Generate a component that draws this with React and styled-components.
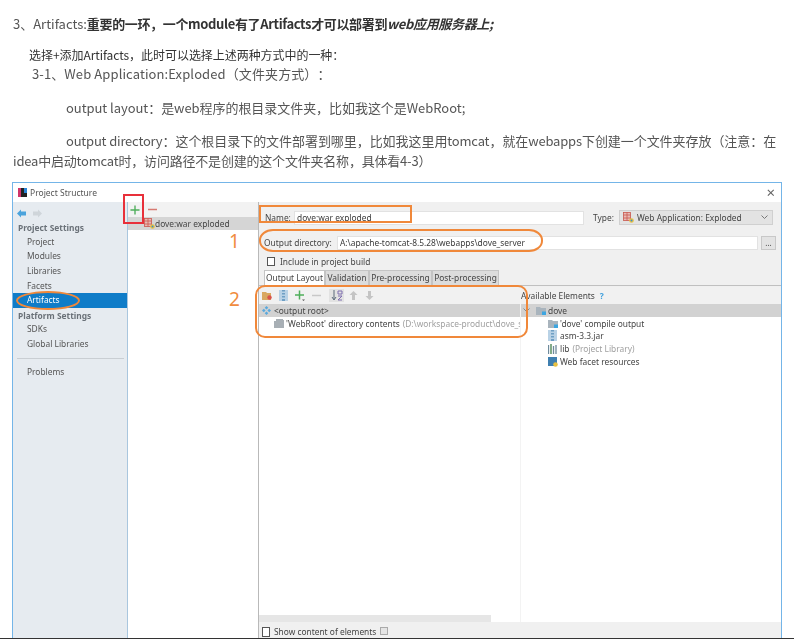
import React from 'react';
import styled, { createGlobalStyle } from 'styled-components';

const Global = createGlobalStyle`
  html, body { margin: 0; padding: 0; background: #fff; }
  * { box-sizing: border-box; }
`;

const Page = styled.div`
  position: relative;
  width: 794px;
  height: 639px;
  overflow: hidden;
  background: #fff;
  border-bottom: 1px solid #333;
  display: flex;
  flex-direction: column;
`;

const Article = styled.div`
  height: 182px;
  padding: 14px 18px 0 13px;
  color: #555;
  font-family: "Noto Sans CJK SC", "Liberation Sans", sans-serif;
  font-size: 13px;
  text-spacing-trim: space-all;
  filter: blur(0.35px);
`;
const Heading = styled.p`
  margin: 0;
  height: 20px;
  line-height: 20px;
  font-size: 13px;
  white-space: nowrap;
  & b { font-weight: 700; color: #333; letter-spacing: -0.35px; }
  & i { font-weight: 700; color: #333; }
`;
const Note = styled.p`
  margin: 11px 0 0 16px;
  height: 19px;
  line-height: 20px;
  font-size: 12px;
  color: #333;
  letter-spacing: -0.05px;
  white-space: nowrap;
`;
const SubHead = styled.p`
  margin: 0 0 0 19px;
  height: 19px;
  line-height: 19px;
  letter-spacing: 0.1px;
  white-space: nowrap;
`;
const Para = styled.p`
  margin: ${p => p.$top}px 0 0;
  line-height: 20px;
  text-indent: 53px;
  text-align: justify;
  letter-spacing: ${p => p.$ls}px;
`;

const Win = styled.div`
  width: 770px;
  height: 456px;
  margin-left: 12px;
  background: #fff;
  border: 1px solid #74b5e8;
  border-bottom: 0;
  display: flex;
  flex-direction: column;
  font-family: "Noto Sans", "Liberation Sans", sans-serif;
  font-size: 8.4px;
  color: #444;
  filter: blur(0.4px);
`;
const TitleBar = styled.div`
  height: 19px;
  flex: none;
  display: flex;
  align-items: center;
  padding: 0 6px 0 5px;
  gap: 3px;
  font-size: 8.5px;
  color: #555;
`;
const Close = styled.span`
  margin-left: auto;
  font-size: 15px;
  line-height: 1;
  color: #666;
`;
const Body = styled.div`
  flex: 1;
  min-height: 0;
  display: flex;
`;
const Sidebar = styled.div`
  width: 115px;
  flex: none;
  background: #e6ebf0;
  border-right: 1px solid #a9c6de;
  display: flex;
  flex-direction: column;
`;
const NavArrows = styled.div`
  height: 19px;
  padding: 3px 0 0 4px;
  display: flex;
  gap: 7px;
  align-items: center;
`;
const SideHead = styled.div`
  height: 13.5px;
  line-height: 13.5px;
  padding-left: 5px;
  font-weight: 700;
  color: #6a7178;
  font-size: 8.4px;
  margin-top: ${p => p.$top || 0}px;
`;
const SideItem = styled.div`
  height: 14.7px;
  line-height: 14.7px;
  padding-left: 14px;
  color: ${p => (p.$on ? '#fff' : '#555')};
  background: ${p => (p.$on ? '#0f7cc8' : 'transparent')};
`;
const SideRule = styled.div`
  height: 1px;
  margin: 6px 3px 6px 4px;
  background: #c9ced3;
`;

const ListCol = styled.div`
  width: 131px;
  flex: none;
  border-right: 1px solid #b9b9b9;
  display: flex;
  flex-direction: column;
`;
const ListBar = styled.div`
  height: 15px;
  background: #f2f2f2;
  display: flex;
  align-items: center;
  padding-left: 2px;
  gap: 8px;
`;
const ListRow = styled.div`
  height: 13px;
  background: #d5d5d5;
  display: flex;
  align-items: center;
  padding-left: 16px;
  color: #444;
  white-space: nowrap;
`;

const Main = styled.div`
  flex: 1;
  min-width: 0;
  background: #f0f0f0;
  display: flex;
  flex-direction: column;
`;
const FormRow = styled.div`
  height: 15px;
  flex: none;
  margin-top: ${p => p.$top}px;
  padding-left: ${p => p.$pad}px;
  display: flex;
  align-items: center;
  white-space: nowrap;
`;
const Label = styled.span`
  flex: none;
  width: ${p => p.$w}px;
  margin-left: ${p => p.$left || 0}px;
  color: #444;
`;
const TextBox = styled.div`
  flex: ${p => (p.$w ? 'none' : 1)};
  width: ${p => (p.$w ? p.$w + 'px' : 'auto')};
  height: 14px;
  line-height: 12px;
  background: #fff;
  border: 1px solid #e2e2e2;
  padding-left: 2px;
  color: #3a3a3a;
`;
const Select = styled.div`
  width: 154px;
  height: 15px;
  flex: none;
  background: #e3e3e3;
  border: 1px solid #d0d0d0;
  display: flex;
  align-items: center;
  padding-left: 3px;
  gap: 3px;
  color: #444;
`;
const Caret = styled.svg`
  flex: none;
  margin-left: ${p => (p.$auto ? 'auto' : '0')};
  margin-right: 4px;
`;
const DotsBtn = styled.div`
  width: 15px;
  height: 14px;
  flex: none;
  margin: 0 5px 0 3px;
  background: #e3e3e3;
  border: 1px solid #c8c8c8;
  text-align: center;
  line-height: 11px;
  font-size: 8px;
`;
const Check = styled.span`
  display: inline-block;
  width: 8px;
  height: ${p => p.$h || 8}px;
  flex: none;
  background: #fff;
  border: 1px solid #555;
`;
const CheckRow = styled.div`
  height: 10px;
  margin-top: 6px;
  padding-left: 8px;
  display: flex;
  align-items: center;
  gap: 5px;
  flex: none;
`;
const Tabs = styled.div`
  height: 16px;
  margin-top: 4px;
  padding-left: 5px;
  display: flex;
  flex: none;
  border-bottom: 1px solid #c0c0c0;
`;
const Tab = styled.div`
  width: ${p => p.$w}px;
  height: 15px;
  line-height: 14px;
  flex: none;
  text-align: center;
  white-space: nowrap;
  background: ${p => (p.$on ? '#fff' : '#dcdcdc')};
  border: 1px solid #c4c4c4;
  border-bottom: 0;
`;
const Panes = styled.div`
  flex: 1;
  min-height: 0;
  margin-top: 1px;
  display: flex;
`;
const LeftPane = styled.div`
  width: 261px;
  flex: none;
  display: flex;
  flex-direction: column;
  background: #fff;
  min-width: 0;
`;
const RightPane = styled.div`
  flex: 1;
  min-width: 0;
  display: flex;
  flex-direction: column;
  background: #fff;
  border-left: 1px solid #f3f3f3;
`;
const PaneHead = styled.div`
  height: 17px;
  flex: none;
  background: #f1f1f1;
  display: flex;
  align-items: center;
  padding-left: ${p => p.$pad}px;
  gap: ${p => p.$gap || 0}px;
  white-space: nowrap;
  & > svg { flex: none; }
`;
const SortBox = styled.span`
  width: 15px;
  height: 13px;
  flex: none;
  margin: 0 -2px 0 1px;
  background: #e2e2e2;
  display: flex;
  align-items: center;
  justify-content: center;
`;
const TreeRow = styled.div`
  height: 12.8px;
  flex: none;
  display: flex;
  align-items: center;
  white-space: nowrap;
  gap: ${p => p.$gap ?? 2}px;
  background: ${p => (p.$sel ? '#d2d2d2' : 'transparent')};
  padding-left: ${p => p.$pad}px;
  color: #444;
  & > svg { flex: none; }
`;
const Dim = styled.span`
  color: #a0a0a0;
  margin-left: 1px;
`;
const Help = styled.span`
  color: #3f9fdc;
  font-weight: 700;
  margin-left: 5px;
`;
const Fill = styled.div`
  flex: 1;
`;
const HScroll = styled.div`
  height: 7px;
  width: 232px;
  flex: none;
  background: #e6e6e6;
`;
const Footer = styled.div`
  height: 16px;
  flex: none;
  display: flex;
  align-items: center;
  padding: 3px 0 0 3px;
  gap: 4px;
  background: #f0f0f0;
`;

const Mark = styled.div`
  position: absolute;
  left: ${p => p.$x}px;
  top: ${p => p.$y}px;
  width: ${p => p.$w}px;
  height: ${p => p.$h}px;
  border: 2px solid ${p => p.$c || '#f0883a'};
  border-radius: ${p => p.$r || '0'};
  pointer-events: none;
`;
const Num = styled.div`
  position: absolute;
  left: ${p => p.$x}px;
  top: ${p => p.$y}px;
  font-family: "Noto Sans", sans-serif;
  font-size: 19px;
  line-height: 20px;
  color: #f08c40;
`;

const Folder = ({ c = '#a9b4bd' }) => (
  <svg width="10" height="9" viewBox="0 0 10 9">
    <path d="M0 1h4l1 1h5v7H0z" fill={c} />
    <rect x="6" y="5.5" width="4" height="3.5" fill="#3da5e0" />
  </svg>
);
const PlainFolder = () => (
  <svg width="10" height="9" viewBox="0 0 10 9">
    <path d="M0 2h2V0h7v1h1v8H0z" fill="#a8afb5" />
  </svg>
);
const WarIcon = () => (
  <svg width="11" height="11" viewBox="0 0 11 11">
    <rect x="0.5" y="0.5" width="7" height="8" fill="#e8b9b5" stroke="#c9584f" strokeWidth="0.8" />
    <path d="M0.5 3h7M0.5 6h7M4 0.5v8" stroke="#c9584f" strokeWidth="0.8" />
    <circle cx="8.5" cy="8.5" r="2.3" fill="#e8c040" />
    <circle cx="8.5" cy="8.5" r="1" fill="#3a8fd0" />
  </svg>
);
const Diamond = () => (
  <svg width="9" height="9" viewBox="0 0 10 10">
    <path d="M5 0l2 2-2 2-2-2zM2 3l2 2-2 2-2-2zM8 3l2 2-2 2-2-2zM5 6l2 2-2 2-2-2z" fill="#5aa9dd" />
  </svg>
);
const Jar = () => (
  <svg width="9" height="11" viewBox="0 0 9 11">
    <rect width="9" height="11" fill="#b9d2e6" />
    <path d="M3 0h3v1.5H3zM3 3h3v1.5H3zM3 6h3v1.5H3zM3 9h3v2H3z" fill="#6f9fc4" />
  </svg>
);
const Lib = () => (
  <svg width="10" height="10" viewBox="0 0 10 10">
    <path d="M0.5 1v9M3 0v10M5.5 2v8M8 1v9" stroke="#6f8a9c" strokeWidth="1.3" />
    <path d="M3 0v10" stroke="#74a96c" strokeWidth="1.3" />
  </svg>
);
const Facet = () => (
  <svg width="10" height="10" viewBox="0 0 10 10">
    <rect width="9" height="9" fill="#3f7fb0" />
    <circle cx="7.5" cy="7.5" r="2.3" fill="#e8c040" />
  </svg>
);
const Plus = ({ s = 10, c = '#4fae5b' }) => (
  <svg width={s} height={s} viewBox="0 0 11 11">
    <path d="M5.5 0.5v10M0.5 5.5h10" stroke={c} strokeWidth="1.5" />
  </svg>
);
const AddMenu = () => (
  <svg width="10" height="11" viewBox="0 0 10 11">
    <path d="M4.5 0.5v9M0 5h9" stroke="#4fae5b" strokeWidth="1.5" />
    <path d="M7 9.5h3l-1.5 1.5z" fill="#555" />
  </svg>
);
const Minus = ({ c = '#d77a72', w = 9 }) => (
  <svg width={w} height="9" viewBox={`0 0 ${w} 9`}>
    <path d={`M0 4.5h${w}`} stroke={c} strokeWidth="1.5" />
  </svg>
);
const ArrowLeft = ({ c, flip }) => (
  <svg width="9" height="9" viewBox="0 0 9 9" style={flip ? { transform: 'scaleX(-1)' } : undefined}>
    <path d="M0 4.5L4 .5v2h5v4H4v2z" fill={c} />
  </svg>
);
const UpDown = ({ down }) => (
  <svg width="9" height="9" viewBox="0 0 8 9" style={down ? { transform: 'scaleY(-1)' } : undefined}>
    <path d="M4 0l4 4H5.5v5h-3V4H0z" fill="#c4c4c4" />
  </svg>
);
const Logo = () => (
  <svg width="9" height="9" viewBox="0 0 9 9">
    <rect width="9" height="9" fill="#222" />
    <rect x="0" y="0" width="3" height="9" fill="#d0366b" />
    <rect x="6" y="0" width="3" height="5" fill="#2a86d8" />
  </svg>
);

export default function App() {
  return (
    <Page>
      <Global />
      <Article>
        <Heading>3、Artifacts:<b>重要的一环，一个module有了Artifacts才可以部署到<i>web应用服务器上;</i></b></Heading>
        <Note>选择+添加Artifacts，此时可以选择上述两种方式中的一种：</Note>
        <SubHead>3-1、Web Application:Exploded（文件夹方式）：</SubHead>
        <Para $top={15} $ls={-0.05}>output layout：是web程序的根目录文件夹，比如我这个是WebRoot;</Para>
        <Para $top={13} $ls={-0.2}>output directory：这个根目录下的文件部署到哪里，比如我这里用tomcat，就在webapps下创建一个文件夹存放（注意：在idea中启动tomcat时，访问路径不是创建的这个文件夹名称，具体看4-3）</Para>
      </Article>

      <Win>
        <TitleBar>
          <Logo />
          Project Structure
          <Close>×</Close>
        </TitleBar>
        <Body>
          <Sidebar>
            <NavArrows>
              <ArrowLeft c="#4ba3dc" />
              <ArrowLeft c="#cfd5da" flip />
            </NavArrows>
            <SideHead>Project Settings</SideHead>
            <SideItem>Project</SideItem>
            <SideItem>Modules</SideItem>
            <SideItem>Libraries</SideItem>
            <SideItem>Facets</SideItem>
            <SideItem $on>Artifacts</SideItem>
            <SideHead $top={1}>Platform Settings</SideHead>
            <SideItem>SDKs</SideItem>
            <SideItem>Global Libraries</SideItem>
            <SideRule />
            <SideItem>Problems</SideItem>
          </Sidebar>

          <ListCol>
            <ListBar>
              <Plus />
              <Minus />
            </ListBar>
            <ListRow>
              <WarIcon />
              dove:war exploded
            </ListRow>
          </ListCol>

          <Main>
            <FormRow $top={8} $pad={6}>
              <Label $w={29}>Name:</Label>
              <TextBox $w={290}>dove:war exploded</TextBox>
              <Label $w={26} $left={9}>Type:</Label>
              <Select>
                <WarIcon />
                Web Application: Exploded
                <Caret $auto width="7" height="5" viewBox="0 0 7 5">
                  <path d="M.5 .5l3 3 3-3" fill="none" stroke="#777" />
                </Caret>
              </Select>
            </FormRow>
            <FormRow $top={10} $pad={5}>
              <Label $w={73}>Output directory:</Label>
              <TextBox>A:\apache-tomcat-8.5.28\webapps\dove_server</TextBox>
              <DotsBtn>...</DotsBtn>
            </FormRow>
            <CheckRow>
              <Check $h={9} />
              Include in project build
            </CheckRow>
            <Tabs>
              <Tab $on $w={61}>Output Layout</Tab>
              <Tab $w={44}>Validation</Tab>
              <Tab $w={63}>Pre-processing</Tab>
              <Tab $w={67}>Post-processing</Tab>
            </Tabs>
            <Panes>
              <LeftPane>
                <PaneHead $pad={3} $gap={7}>
                  <svg width="10" height="9" viewBox="0 0 10 9">
                    <path d="M0 1h4l1 1h4v7H0z" fill="#d9a860" />
                    <circle cx="7.5" cy="6.5" r="2.2" fill="#d9534a" />
                  </svg>
                  <Jar />
                  <AddMenu />
                  <Minus c="#c8c8c8" />
                  <SortBox>
                    <svg width="12" height="11" viewBox="0 0 12 11">
                      <path d="M3 0v9M1 7l2 3 2-3" stroke="#5a6a7a" fill="none" />
                      <path d="M7 1h4v3H7zM7 6h4L7 10h4" stroke="#7f6fb0" fill="none" />
                    </svg>
                  </SortBox>
                  <UpDown />
                  <UpDown down />
                </PaneHead>
                <TreeRow $sel $pad={3} $gap={3}>
                  <Diamond />
                  &lt;output root&gt;
                </TreeRow>
                <TreeRow $pad={15}>
                  <PlainFolder />
                  'WebRoot' directory contents
                  <Dim>(D:\workspace-product\dove_s</Dim>
                </TreeRow>
                <Fill />
                <HScroll />
              </LeftPane>
              <RightPane>
                <PaneHead $pad={0}>
                  Available Elements
                  <Help>?</Help>
                </PaneHead>
                <TreeRow $sel $pad={2}>
                  <Caret width="7" height="5" viewBox="0 0 7 5">
                    <path d="M.5 .5l3 3 3-3" fill="none" stroke="#888" />
                  </Caret>
                  <Folder />
                  dove
                </TreeRow>
                <TreeRow $pad={27}><Folder />'dove' compile output</TreeRow>
                <TreeRow $pad={27} $gap={3}><Jar />asm-3.3.jar</TreeRow>
                <TreeRow $pad={27}><Lib />lib <Dim>(Project Library)</Dim></TreeRow>
                <TreeRow $pad={27}><Facet />Web facet resources</TreeRow>
                <Fill />
              </RightPane>
            </Panes>
            <Footer>
              <Check $h={10} />
              Show content of elements
              <svg width="8" height="9" viewBox="0 0 8 9">
                <rect x=".5" y=".5" width="7" height="7" fill="#e4e4e4" stroke="#aaa" />
              </svg>
            </Footer>
          </Main>
        </Body>
      </Win>

      <Mark $x={16} $y={291} $w={64} $h={19} $r="50%" />
      <Mark $x={123} $y={194} $w={21} $h={30} $c="#e8303a" />
      <Mark $x={259} $y={205} $w={153} $h={18} />
      <Mark $x={259} $y={229} $w={284} $h={23} $r="14px / 11px" />
      <Mark $x={255} $y={285} $w={273} $h={53} $r="10px" />
      <Num $x={229} $y={231}>1</Num>
      <Num $x={229} $y={289}>2</Num>
    </Page>
  );
}
